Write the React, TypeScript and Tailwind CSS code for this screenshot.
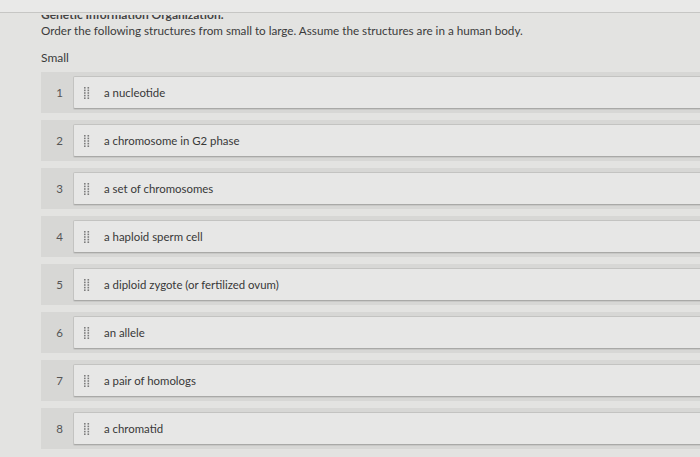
import React from 'react';

const items = [
  'a nucleotide',
  'a chromosome in G2 phase',
  'a set of chromosomes',
  'a haploid sperm cell',
  'a diploid zygote (or fertilized ovum)',
  'an allele',
  'a pair of homologs',
  'a chromatid',
];

// grip dots shown on each draggable item
function Grip() {
  const dots = [];
  for (let r = 0; r < 5; r++) {
    for (let c = 0; c < 2; c++) {
      dots.push(<rect key={`${r}-${c}`} x={c * 3.5} y={r * 2.6} width="1.6" height="1.6" fill="#7d7d7d" />);
    }
  }
  return (
    <svg width="6" height="12" viewBox="0 0 6 12" className="shrink-0">
      {dots}
    </svg>
  );
}

export default function App() {
  return (
    <div className="w-[700px] h-[457px] overflow-hidden bg-[#e3e3e1] text-[#3b3b3b]" style={{ fontFamily: 'Lato, "Open Sans", sans-serif' }}>
      <div className="h-[13px] bg-[#e9e9e8] border-b border-[#c6c6c4]" />

      <div className="pl-[41px]">
        <div className="mt-[2px] h-[7px] overflow-hidden flex items-end">
          <div className="text-[12px] leading-[12px] font-bold text-[#444] -translate-y-[1px]">
            Genetic Information Organization.
          </div>
        </div>
        <div className="text-[11.7px] leading-[16px]">
          Order the following structures from small to large. Assume the structures are in a human body.
        </div>
        <div className="text-[12px] leading-[15px] mt-[12px]">Small</div>

        <div className="mt-[7px] flex flex-col gap-[7px]">
          {items.map((label, i) => (
            <div key={label} className="w-[700px] h-[41px] bg-[#d7d7d5] flex items-center">
              <div className="w-[32px] text-[11.5px] text-[#555] text-right pr-[10px]">{i + 1}</div>
              <div className="flex-1 h-[33px] bg-[#e7e7e6] border border-[#c3c3c1] border-b-[#a9a9a7] rounded-[2px] flex items-center pl-[10px] gap-[14px] shadow-[0_1px_0_#c8c8c6]">
                <Grip />
                <span className="text-[11.4px] text-[#383838]">{label}</span>
              </div>
            </div>
          ))}
        </div>
      </div>
    </div>
  );
}
